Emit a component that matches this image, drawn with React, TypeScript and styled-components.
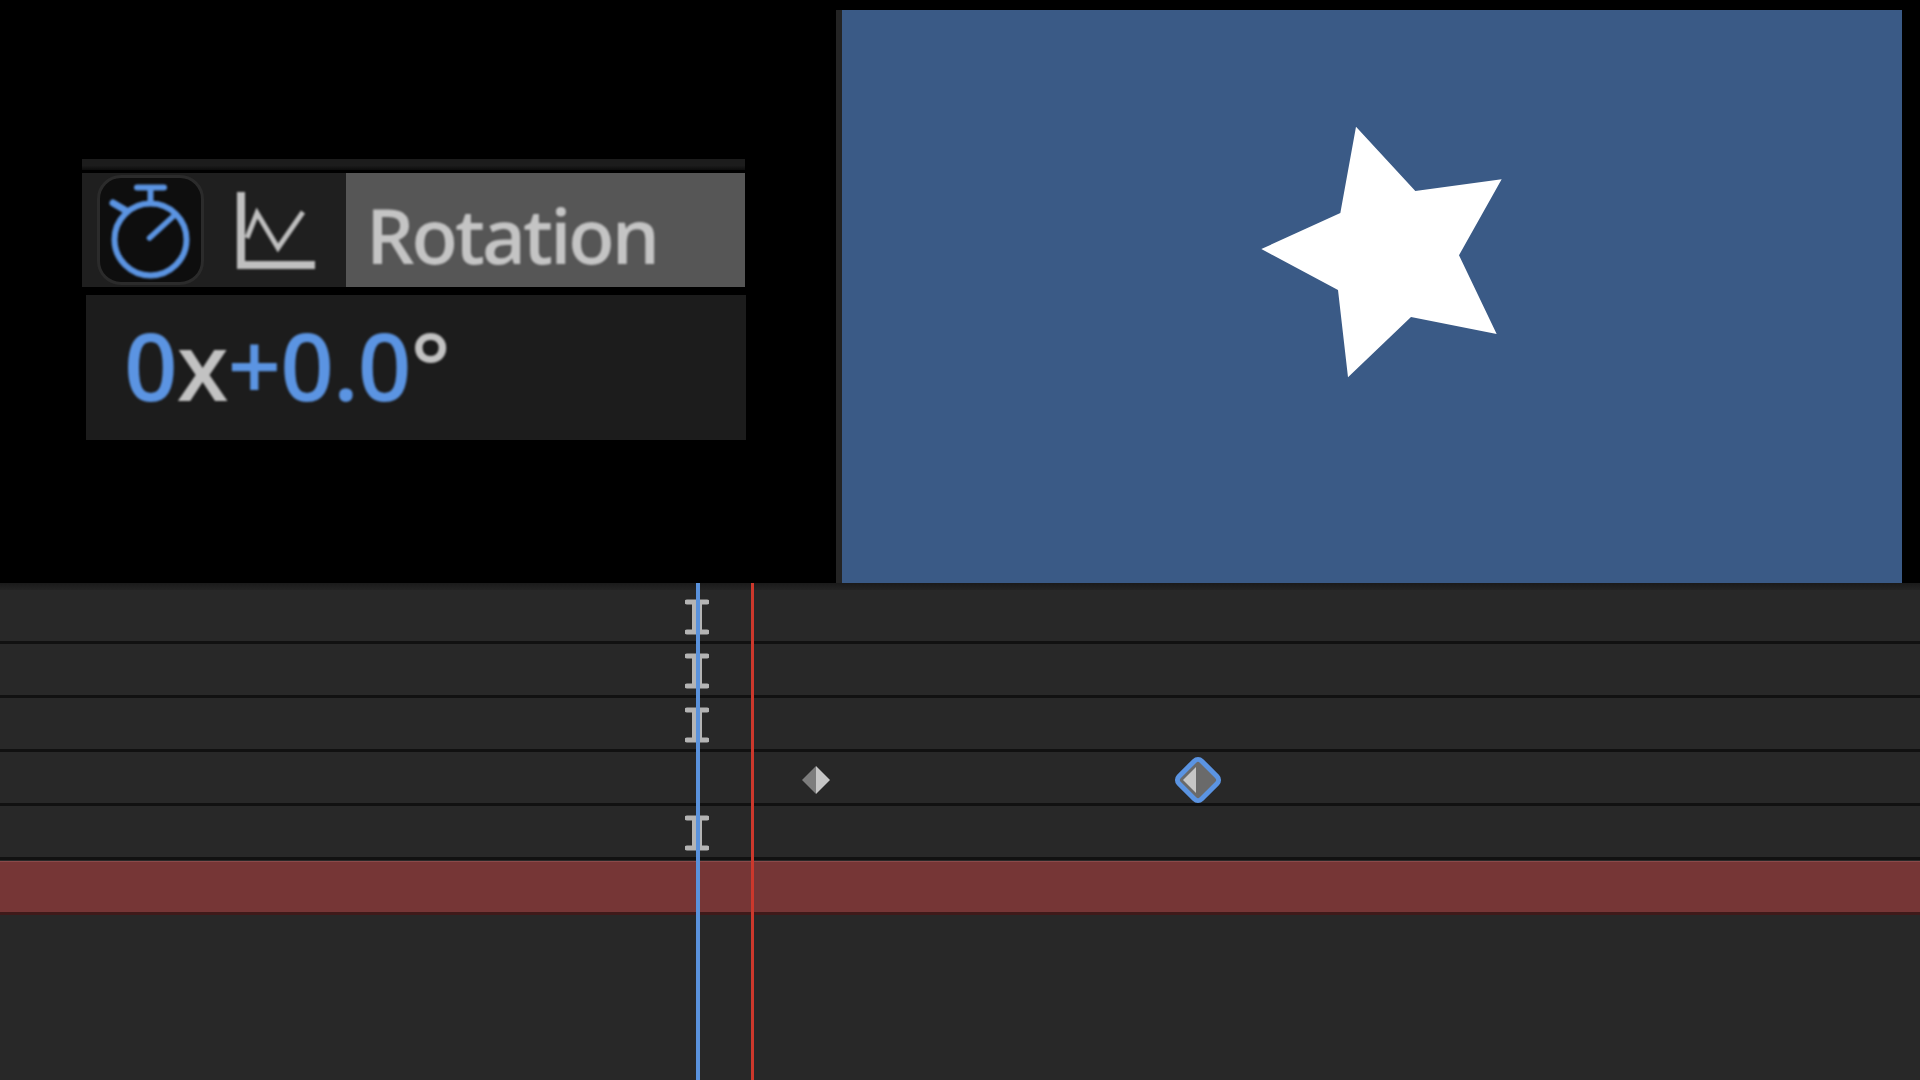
import React from 'react';
import styled, {createGlobalStyle} from 'styled-components';

const GlobalStyle = createGlobalStyle`
  html, body {
    margin: 0;
    padding: 0;
    background: #000;
  }
`;

const Page = styled.div`
  width: 1920px;
  height: 1080px;
  overflow: hidden;
  display: flex;
  flex-direction: column;
  background: #000;
`;

const TopArea = styled.div`
  height: 583px;
  display: flex;
`;

const ZoomArea = styled.div`
  width: 836px;
  padding: 159px 0 0 82px;
  box-sizing: border-box;
`;

const PropertyPanel = styled.div`
  width: 664px;
  display: flex;
  flex-direction: column;

  svg {
    filter: blur(0.8px);
  }
`;

const HeaderEdge = styled.div`
  height: 11px;
  margin-right: 1px;
  background: linear-gradient(#1c1c1c 60%, #0c0c0c);
`;

const PropertyHeader = styled.div`
  height: 114px;
  margin-top: 3px;
  margin-right: 1px;
  display: flex;
  background: #1f1f1f;
`;

const StopwatchBox = styled.div`
  width: 107px;
  height: 110px;
  margin: 2px 0 0 15px;
  box-sizing: border-box;
  border: 3px solid #2b2b2b;
  border-radius: 24px;
  background: #0e0e0e;
  display: flex;
  align-items: center;
  justify-content: center;
`;

const GraphSlot = styled.div`
  width: 142px;
  display: flex;
  align-items: center;
  justify-content: center;
`;

const PropertyName = styled.div`
  flex: 1;
  padding: 10px 0 0 20px;
  display: flex;
  align-items: center;
  background: #565656;
  color: #c4c4c4;
  font-family: 'Open Sans', sans-serif;
  font-size: 76px;
  font-weight: 600;
  letter-spacing: -3px;
  line-height: 1;
`;

const NameText = styled.span`
  filter: blur(0.9px);
`;

const ValueBox = styled.div`
  height: 145px;
  margin: 8px 0 0 4px;
  padding-left: 38px;
  display: flex;
  align-items: center;
  background: #1c1c1c;
  font-family: 'Open Sans', sans-serif;
  font-size: 94px;
  font-weight: 600;
  letter-spacing: -1px;
  line-height: 1;
`;

const ValueText = styled.span`
  margin-top: -6px;
  filter: blur(0.9px);
`;

const BlueValue = styled.span`
  color: #5b94e2;
`;

const GreyValue = styled.span`
  color: #c2c2c2;
`;

const Divider = styled.div`
  width: 6px;
  margin-top: 10px;
  background: #242424;
`;

const Preview = styled.div`
  width: 1060px;
  margin-top: 10px;
  padding: 100px 0 0 398px;
  box-sizing: border-box;
  background: #3a5a86;
`;

const Timeline = styled.div`
  position: relative;
  flex: 1;
  display: flex;
  flex-direction: column;
  background: #282828;
`;

const TimelineEdge = styled.div`
  height: 7px;
  background: linear-gradient(#1a1a1a, #242424);
`;

const TrackRow = styled.div`
  height: 54px;
  box-sizing: border-box;
  border-bottom: 3px solid #111;
  display: flex;
  align-items: center;
`;

const MarkerSlot = styled.div<{$offset: number}>`
  margin-left: ${(p) => p.$offset}px;
  display: flex;
`;

const KeyframeSlot = styled(MarkerSlot)`
  padding-top: 5px;
`;

const WorkBar = styled.div`
  height: 50px;
  margin-top: 1px;
  background: #763636;
  border-top: 1px solid #8a4a4a;
  border-bottom: 3px solid #3f1a1a;
`;

const Playhead = styled.div<{$left: number; $width: number; $color: string}>`
  position: absolute;
  top: 0;
  bottom: 0;
  left: ${(p) => p.$left}px;
  width: ${(p) => p.$width}px;
  background: ${(p) => p.$color};
`;

const StopwatchIcon = () => (
  <svg width="84" height="98" viewBox="0 0 84 98" fill="none" stroke="#5b94e2" strokeLinecap="round">
    <circle cx="41.5" cy="58.5" r="36" strokeWidth="6" />
    <path d="M28 6.5H55" strokeWidth="6" />
    <path d="M41.5 7V21" strokeWidth="6" />
    <path d="M4 22L16 29" strokeWidth="7" />
    <path d="M40.5 57L63.5 36" strokeWidth="5.5" />
  </svg>
);

const GraphIcon = () => (
  <svg width="84" height="84" viewBox="0 0 84 84" fill="none" stroke="#bfbfbf" strokeWidth="8">
    <path d="M8 4V77H82" />
    <path d="M14 50L24 25L45 60L70 24" strokeWidth="5" />
  </svg>
);

const IBeam = () => (
  <svg width="24" height="39" viewBox="0 0 24 39" fill="none" stroke="#b4b4b4" strokeLinecap="round">
    <path d="M2 6H22M2 36H22" strokeWidth="5" />
    <path d="M12 6V36" strokeWidth="10" strokeLinecap="butt" />
  </svg>
);

const SmallKeyframe = () => (
  <svg width="30" height="30" viewBox="0 0 30 30">
    <path d="M15 1L1 15L15 29Z" fill="#7d7d7d" />
    <path d="M15 1L29 15L15 29Z" fill="#c6c6c6" />
  </svg>
);

const SelectedKeyframe = () => (
  <svg width="54" height="54" viewBox="0 0 54 54">
    <rect x="11" y="11" width="32" height="32" rx="5" transform="rotate(45 27 27)" fill="#6a6a6a" stroke="#5b94e2" strokeWidth="5" />
    <path d="M25 14L12 27L25 40Z" fill="#c6c6c6" />
  </svg>
);

const Star = () => (
  <svg width="280" height="280" viewBox="0 0 840 840">
    <polygon
      fill="#fff"
      points="348,50 526,243 785,208 657,436 770,672 513,621 324,802 294,540 64,417 301,309"
    />
  </svg>
);

const App = () => (
  <Page>
    <GlobalStyle />
    <TopArea>
      <ZoomArea>
        <PropertyPanel>
          <HeaderEdge />
          <PropertyHeader>
            <StopwatchBox>
              <StopwatchIcon />
            </StopwatchBox>
            <GraphSlot>
              <GraphIcon />
            </GraphSlot>
            <PropertyName>
              <NameText>Rotation</NameText>
            </PropertyName>
          </PropertyHeader>
          <ValueBox>
            <ValueText>
              <BlueValue>0</BlueValue>
              <GreyValue>x</GreyValue>
              <BlueValue>+0.0</BlueValue>
              <GreyValue>°</GreyValue>
            </ValueText>
          </ValueBox>
        </PropertyPanel>
      </ZoomArea>
      <Divider />
      <Preview>
        <Star />
      </Preview>
    </TopArea>
    <Timeline>
      <TimelineEdge />
      <TrackRow>
        <MarkerSlot $offset={685}>
          <IBeam />
        </MarkerSlot>
      </TrackRow>
      <TrackRow>
        <MarkerSlot $offset={685}>
          <IBeam />
        </MarkerSlot>
      </TrackRow>
      <TrackRow>
        <MarkerSlot $offset={685}>
          <IBeam />
        </MarkerSlot>
      </TrackRow>
      <TrackRow>
        <KeyframeSlot $offset={801}>
          <SmallKeyframe />
        </KeyframeSlot>
        <KeyframeSlot $offset={340}>
          <SelectedKeyframe />
        </KeyframeSlot>
      </TrackRow>
      <TrackRow>
        <MarkerSlot $offset={685}>
          <IBeam />
        </MarkerSlot>
      </TrackRow>
      <WorkBar />
      <Playhead $left={696} $width={4} $color="#5a92dc" />
      <Playhead $left={751} $width={3} $color="#cc382c" />
    </Timeline>
  </Page>
);

export default App;
